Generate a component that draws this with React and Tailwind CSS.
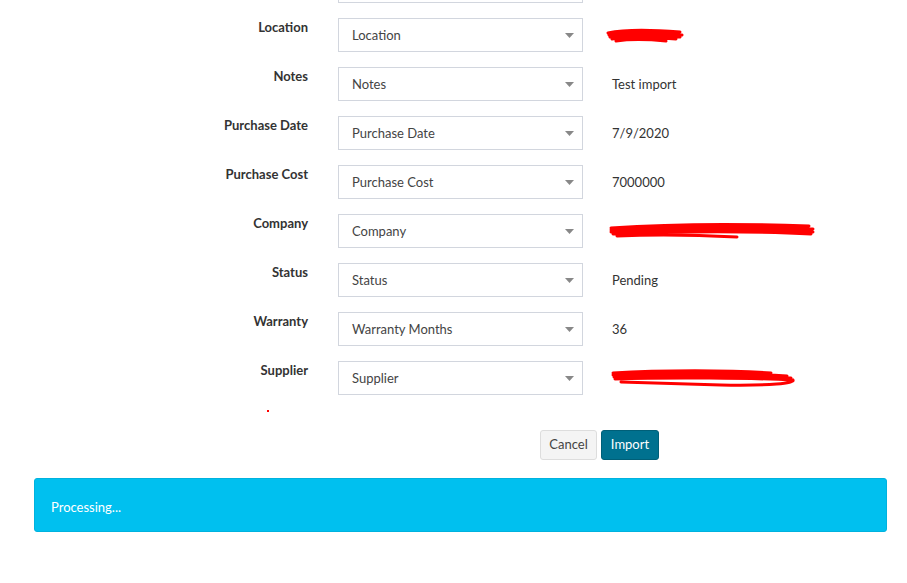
const rows = [
  { label: 'Location', field: 'Location', value: null, scribble: 'loc' },
  { label: 'Notes', field: 'Notes', value: 'Test import' },
  { label: 'Purchase Date', field: 'Purchase Date', value: '7/9/2020' },
  { label: 'Purchase Cost', field: 'Purchase Cost', value: '7000000' },
  { label: 'Company', field: 'Company', value: null, scribble: 'company' },
  { label: 'Status', field: 'Status', value: 'Pending' },
  { label: 'Warranty', field: 'Warranty Months', value: '36' },
  { label: 'Supplier', field: 'Supplier', value: null, scribble: 'supplier' },
]

function Scribble({ kind }) {
  if (kind === 'loc') {
    return (
      <svg width="80" height="16" viewBox="0 0 80 16" className="-ml-[6px]">
        <path d="M2 6 C20 2 50 3 74 5 M3 8 C25 4 55 5 76 8 M4 10 C25 7 55 8 74 10 M6 12 C22 9 45 10 70 12 M10 14 C30 11 50 13 60 14" stroke="#f00" strokeWidth="3" fill="none" strokeLinecap="round" />
      </svg>
    )
  }
  if (kind === 'company') {
    return (
      <svg width="206" height="18" viewBox="0 0 206 18" className="-ml-[3px]">
        <path d="M2 6 C60 2 140 2 200 4 M2 8 C70 4 150 4 204 7 M2 10 C70 6 150 7 204 10 M4 12 C70 9 150 9 202 12 M8 14 C50 12 90 13 128 15" stroke="#f00" strokeWidth="3" fill="none" strokeLinecap="round" />
      </svg>
    )
  }
  return (
    <svg width="186" height="20" viewBox="0 0 186 20" className="-ml-[1px]">
      <path d="M2 5 C50 2 120 2 160 5 M2 7 C60 4 130 5 176 8 M3 9 C60 7 130 8 180 10 M4 11 C60 9 140 10 182 12 C184 15 160 18 110 17 C70 16 40 15 10 14" stroke="#f00" strokeWidth="3" fill="none" strokeLinecap="round" />
    </svg>
  )
}

function Row({ row }) {
  return (
    <div className="flex items-start h-[34px]">
      <div className="w-[308px] text-right font-bold text-[#333] text-[13px] leading-[20px] -mt-[1px]">{row.label}</div>
      <div className="ml-[30px] w-[245px] h-[34px] border border-[#d2d6de] bg-white flex items-center justify-between pl-[13px] pr-[8px] text-[13px] text-[#444]">
        <span className="pt-[2px]">{row.field}</span>
        <svg width="9" height="5" viewBox="0 0 9 5"><path d="M0 0 H9 L4.5 5 Z" fill="#888" /></svg>
      </div>
      <div className="ml-[29px] h-[34px] flex items-center text-[13px] text-[#333]">
        {row.value ? <span className="pt-[1px]">{row.value}</span> : <Scribble kind={row.scribble} />}
      </div>
    </div>
  )
}

export default function App() {
  return (
    <div className="w-[907px] h-[583px] bg-white overflow-hidden" style={{ fontFamily: 'Lato, "Open Sans", sans-serif' }}>
      <div className="flex flex-col gap-[15px] -mt-[31px]">
        <div className="flex h-[34px]">
          <div className="ml-[338px] w-[245px] h-[34px] border border-[#d2d6de]" />
        </div>
        {rows.map(r => <Row key={r.label} row={r} />)}
      </div>
      <div className="h-[35px] relative">
        <span className="absolute left-[267px] top-[15px] w-[2px] h-[2px] bg-[#f00]" />
      </div>
      <div className="flex gap-[4px] ml-[540px]">
        <button className="w-[57px] h-[30px] bg-[#f4f4f4] border border-[#ddd] rounded-[3px] text-[13px] text-[#444]">Cancel</button>
        <button className="w-[58px] h-[30px] bg-[#00718f] border border-[#005f78] rounded-[3px] text-[13px] text-white">Import</button>
      </div>
      <div className="ml-[34px] mt-[18px] w-[853px] h-[54px] bg-[#00c0ef] border border-[#00b2de] rounded-[3px] flex items-center pt-[6px] pl-[16px] text-[13px] text-white">
        Processing...
      </div>
    </div>
  )
}
